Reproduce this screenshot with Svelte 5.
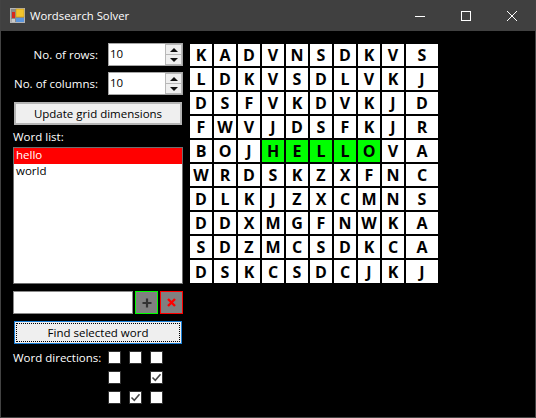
<script lang="ts">
	let rows = $state(10);
	let columns = $state(10);
	let selected = $state('hello');
	let newWord = $state('');

	const words = ['hello', 'world'];

	const letters = [
		'KADVNSDKVS',
		'LDKVSDLVKJ',
		'DSFVKDVKJD',
		'FWVJDSFKJR',
		'BOJHELLOVA',
		'WRDSKZXFNC',
		'DLKJZXCMNS',
		'DDXMGFNWKA',
		'SDZMCSDKCA',
		'DSKCSDCJKJ'
	];

	const found = new Set([43, 44, 45, 46, 47]);

	let directions = $state([false, false, false, false, null, true, false, true, false]);
</script>

<div class="window">
	<header class="titlebar">
		<svg class="app-icon" viewBox="0 0 15 15" width="15" height="15">
			<rect x="0.5" y="0.5" width="14" height="14" fill="#8a8a8a" stroke="#b5b5b5" />
			<rect x="6" y="1" width="8" height="8" fill="#f3c52c" stroke="#c8961a" stroke-width="0.6" />
			<rect x="2" y="4" width="3" height="6" fill="#d8281e" />
			<rect x="6" y="10" width="8" height="4" fill="#5b95dd" />
			<rect x="1.5" y="11" width="3.5" height="3" fill="#c9c9c9" />
		</svg>
		<span class="title">Wordsearch Solver</span>
		<div class="controls">
			<button class="control" aria-label="Minimize">
				<svg viewBox="0 0 10 10" width="10" height="10"><path d="M0 5.5h10" stroke="#fff" /></svg>
			</button>
			<button class="control" aria-label="Maximize">
				<svg viewBox="0 0 10 10" width="10" height="10"><rect x="0.5" y="0.5" width="9" height="9" fill="none" stroke="#fff" /></svg>
			</button>
			<button class="control" aria-label="Close">
				<svg viewBox="0 0 10 10" width="10" height="10"><path d="M0 0l10 10M10 0L0 10" stroke="#fff" /></svg>
			</button>
		</div>
	</header>

	<main class="client">
		<section class="side">
			<div class="field">
				<span class="label">No. of rows:</span>
				<div class="spin">
					<input bind:value={rows} />
					<div class="spin-buttons">
						<span class="arrow"><i class="up"></i></span>
						<span class="arrow"><i class="down"></i></span>
					</div>
				</div>
			</div>
			<div class="field second">
				<span class="label">No. of columns:</span>
				<div class="spin">
					<input bind:value={columns} />
					<div class="spin-buttons">
						<span class="arrow"><i class="up"></i></span>
						<span class="arrow"><i class="down"></i></span>
					</div>
				</div>
			</div>

			<button class="action update">Update grid dimensions</button>

			<div class="list-label">Word list:</div>
			<ul class="word-list">
				{#each words as word}
					<!-- svelte-ignore a11y_click_events_have_key_events, a11y_no_noninteractive_element_interactions -->
					<li class:active={selected === word} onclick={() => (selected = word)}>{word}</li>
				{/each}
			</ul>

			<div class="add-row">
				<input class="word-input" bind:value={newWord} />
				<button class="square add" aria-label="Add word">
					<svg viewBox="0 0 10 10" width="10" height="10"><path d="M5 0.5v9M0.5 5h9" stroke="#333" stroke-width="2.2" /></svg>
				</button>
				<button class="square remove" aria-label="Remove word">
					<svg viewBox="0 0 9 9" width="9" height="9"><path d="M1 1l7 7M8 1L1 8" stroke="#f00" stroke-width="2.4" /></svg>
				</button>
			</div>

			<button class="action find"><span>Find selected word</span></button>

			<div class="directions">
				<span class="directions-label">Word directions:</span>
				<div class="checks">
					{#each directions as checked, i}
						{#if checked === null}
							<span></span>
						{:else}
							<button class="check" aria-label="Direction {i}" onclick={() => (directions[i] = !checked)}>
								{#if checked}
									<svg viewBox="0 0 11 11" width="11" height="11"><path d="M1.5 5.5l2.8 2.8L9.5 2.2" fill="none" stroke="#444" stroke-width="1.5" /></svg>
								{/if}
							</button>
						{/if}
					{/each}
				</div>
			</div>
		</section>

		<section class="grid">
			{#each letters.join('') as letter, i}
				<div class="cell" class:found={found.has(i)}>{letter}</div>
			{/each}
		</section>
	</main>
</div>

<style>
	:global(body) {
		background: #000;
	}

	.window {
		width: 536px;
		height: 418px;
		box-sizing: border-box;
		background: #000;
		border: 1px solid #434343;
		border-top: none;
		font-family: "Open Sans", "Liberation Sans", sans-serif;
		font-size: 11.5px;
		color: #fff;
		overflow: hidden;
	}

	.titlebar {
		display: flex;
		align-items: center;
		height: 31px;
		background: #404040;
		padding-left: 9px;
	}

	.app-icon {
		flex-shrink: 0;
	}

	.title {
		margin-left: 5px;
		font-size: 11.3px;
		color: #fff;
	}

	.controls {
		display: flex;
		margin-left: auto;
	}

	.control {
		display: flex;
		align-items: center;
		justify-content: center;
		width: 46px;
		height: 31px;
		padding: 0;
		background: transparent;
		border: none;
	}

	.client {
		display: flex;
		padding: 12px 0 0 12px;
		gap: 5px;
	}

	.side {
		display: flex;
		flex-direction: column;
		width: 172px;
		flex-shrink: 0;
	}

	.field {
		display: flex;
		align-items: center;
		height: 23px;
	}

	.field.second {
		margin-top: 6px;
	}

	.label {
		display: flex;
		justify-content: flex-end;
		width: 85px;
		margin-right: 10px;
		margin-bottom: 1px;
		white-space: nowrap;
		flex-shrink: 0;
	}

	.spin {
		display: flex;
		box-sizing: border-box;
		width: 75px;
		height: 23px;
		background: #fff;
		border: 1px solid #a6a6a6;
	}

	.spin input {
		flex: 1;
		min-width: 0;
		padding: 0 0 2px 1px;
		border: none;
		outline: none;
		background: transparent;
		font: inherit;
		color: #000;
	}

	.spin-buttons {
		display: flex;
		flex-direction: column;
		width: 15px;
		padding: 1px;
		gap: 1px;
		background: #b8b8b8;
	}

	.arrow {
		flex: 1;
		display: flex;
		align-items: center;
		justify-content: center;
		background: #efefef;
	}

	.arrow i {
		width: 0;
		height: 0;
		border-left: 4px solid transparent;
		border-right: 4px solid transparent;
	}

	.arrow .up {
		border-bottom: 4px solid #111;
	}

	.arrow .down {
		border-top: 4px solid #111;
	}

	.action {
		display: block;
		box-sizing: border-box;
		height: 23px;
		margin-left: 1px;
		width: 168px;
		padding: 0;
		background: #efefef;
		font: inherit;
		color: #000;
	}

	.update {
		margin-top: 7px;
		border: 2px solid #b4b4b4;
	}

	.list-label {
		margin-top: 2px;
		margin-bottom: 1px;
		line-height: 19px;
	}

	.word-list {
		box-sizing: border-box;
		width: 170px;
		height: 137px;
		margin: 0;
		padding: 0;
		list-style: none;
		background: #fff;
		border: 1px solid #6e6e6e;
		color: #000;
	}

	.word-list li {
		height: 15.5px;
		line-height: 14px;
		padding-left: 2px;
	}

	.word-list li.active {
		background: #f00;
		color: #fff;
	}

	.add-row {
		display: flex;
		gap: 2px;
		margin-top: 7px;
		height: 23px;
	}

	.word-input {
		box-sizing: border-box;
		width: 120px;
		height: 23px;
		padding: 0;
		background: #fff;
		border: 1px solid #8a8a8a;
		outline: none;
		font: inherit;
	}

	.square {
		display: flex;
		align-items: center;
		justify-content: center;
		box-sizing: border-box;
		width: 23px;
		height: 23px;
		padding: 0;
		background: #808080;
		border-width: 1px;
		border-style: solid;
	}

	.add {
		border-color: #0f0;
	}

	.remove {
		border-color: #f00;
	}

	.find {
		margin-top: 7px;
		padding: 1px;
		border: 1px solid #1a7fd6;
	}

	.find span {
		display: block;
		line-height: 17px;
		border: 1px dotted #000;
	}

	.directions {
		display: flex;
		margin-top: 7px;
	}

	.directions-label {
		width: 95px;
		line-height: 13px;
		white-space: nowrap;
	}

	.checks {
		display: grid;
		grid-template-columns: repeat(3, 13px);
		grid-auto-rows: 13px;
		column-gap: 8px;
		row-gap: 7px;
	}

	.check {
		display: flex;
		align-items: center;
		justify-content: center;
		box-sizing: border-box;
		width: 13px;
		height: 13px;
		padding: 0;
		background: #fff;
		border: 1px solid #333;
	}

	.grid {
		display: grid;
		grid-template-columns: repeat(9, 22px) 32px;
		grid-template-rows: repeat(9, 22px) 23px;
		gap: 2px;
		margin-top: 1px;
	}

	.cell {
		display: flex;
		align-items: center;
		justify-content: center;
		background: #fff;
		color: #000;
		font-size: 16px;
		font-weight: 700;
	}

	.cell.found {
		background: #0f0;
	}
</style>
